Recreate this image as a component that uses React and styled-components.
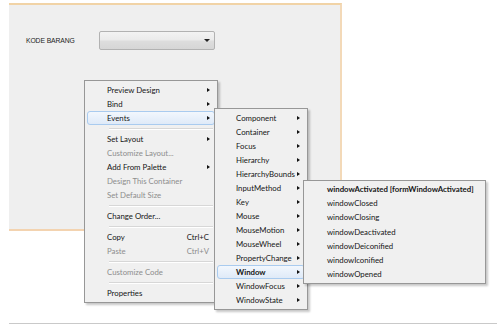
import React from "react";
import styled, { createGlobalStyle } from "styled-components";

const GlobalStyle = createGlobalStyle`
  html, body {
    margin: 0;
    padding: 0;
    background: #ffffff;
  }
  body {
    font-family: Lato, "Noto Sans", sans-serif;
  }
`;

const Page = styled.div`
  position: relative;
  width: 497px;
  height: 327px;
  padding: 3px 0 0 9px;
  box-sizing: border-box;
  overflow: hidden;
`;

const Panel = styled.div`
  width: 333px;
  height: 228px;
  box-sizing: border-box;
  background: #efefef;
  border-top: 2px solid #f1d3a6;
  border-right: 2px solid #f3d9b8;
  border-bottom: 2px solid #f3d3b0;
  padding: 26px 0 0 17px;
`;

const FieldRow = styled.div`
  display: flex;
  align-items: center;
  gap: 24px;
`;

const Label = styled.span`
  font-family: "Liberation Sans", sans-serif;
  font-size: 6.8px;
  color: #222;
  letter-spacing: -0.1px;
`;

const Combo = styled.div`
  width: 116px;
  height: 19px;
  box-sizing: border-box;
  border: 1px solid #b2b2b2;
  border-radius: 2px;
  background: linear-gradient(#f3f3f3 0%, #ebebeb 45%, #dddddd 55%, #d6d6d6 100%);
  display: flex;
  align-items: center;
  justify-content: flex-end;
  padding-right: 4px;
`;

const ComboArrow = styled.span`
  width: 0;
  height: 0;
  border-left: 3px solid transparent;
  border-right: 3px solid transparent;
  border-top: 3px solid #222;
`;

const BottomRule = styled.div`
  margin-top: 92px;
  height: 1px;
  background: #c9c9c9;
`;

const Menu = styled.div`
  position: absolute;
  left: ${p => p.$left}px;
  top: ${p => p.$top}px;
  width: ${p => p.$width}px;
  box-sizing: border-box;
  background: #f0f0f0;
  border: 1px solid #979797;
  padding: ${p => p.$pad}px 2px 2px 2px;
  box-shadow: 2px 2px 2px rgba(0, 0, 0, 0.22);
  display: flex;
  flex-direction: column;
  font-family: Lato, "Noto Sans", sans-serif;
  font-size: 7.8px;
`;

const Item = styled.div`
  height: ${p => p.$h}px;
  box-sizing: border-box;
  display: flex;
  align-items: center;
  padding-left: ${p => p.$indent}px;
  padding-right: 4px;
  color: ${p => (p.$disabled ? "#8d8d8d" : "#161616")};
  font-weight: ${p => (p.$bold ? 700 : 400)};
  border: 1px solid ${p => (p.$active ? "#a9cbef" : "transparent")};
  border-radius: 3px;
  background: ${p =>
    p.$active ? "linear-gradient(#f2f7fd, #dfeaf8)" : "transparent"};
  white-space: nowrap;
`;

const ItemText = styled.span`
  flex: 1;
  margin-right: 2px;
`;

const Shortcut = styled.span`
  color: inherit;
  margin-right: 1px;
`;

const SubArrow = styled.span`
  flex: none;
  width: 0;
  height: 0;
  border-top: 2.5px solid transparent;
  border-bottom: 2.5px solid transparent;
  border-left: 3px solid #111;
`;

const Separator = styled.div`
  height: 1px;
  margin: 3px 2px 2px 22px;
  background: #d7d7d7;
  border-bottom: 1px solid #ffffff;
`;

const mainItems = [
  { label: "Preview Design", arrow: true },
  { label: "Bind", arrow: true },
  { label: "Events", arrow: true, active: true },
  { sep: true },
  { label: "Set Layout", arrow: true },
  { label: "Customize Layout...", disabled: true },
  { label: "Add From Palette", arrow: true },
  { label: "Design This Container", disabled: true },
  { label: "Set Default Size", disabled: true },
  { sep: true },
  { label: "Change Order..." },
  { sep: true },
  { label: "Copy", shortcut: "Ctrl+C" },
  { label: "Paste", shortcut: "Ctrl+V", disabled: true },
  { sep: true },
  { label: "Customize Code", disabled: true },
  { sep: true },
  { label: "Properties" },
];

const eventItems = [
  "Component",
  "Container",
  "Focus",
  "Hierarchy",
  "HierarchyBounds",
  "InputMethod",
  "Key",
  "Mouse",
  "MouseMotion",
  "MouseWheel",
  "PropertyChange",
  "Window",
  "WindowFocus",
  "WindowState",
].map(label => ({ label, arrow: true, active: label === "Window", bold: label === "Window" }));

const windowItems = [
  { label: "windowActivated [formWindowActivated]", bold: true },
  { label: "windowClosed" },
  { label: "windowClosing" },
  { label: "windowDeactivated" },
  { label: "windowDeiconified" },
  { label: "windowIconified" },
  { label: "windowOpened" },
];

const PopupMenu = ({ items, left, top, width, pad = 2, indent = 19, rowHeight = 14 }) => (
  <Menu $left={left} $top={top} $width={width} $pad={pad}>
    {items.map((it, i) =>
      it.sep ? (
        <Separator key={i} />
      ) : (
        <Item
          key={i}
          $h={rowHeight}
          $indent={indent}
          $disabled={it.disabled}
          $bold={it.bold}
          $active={it.active}
        >
          <ItemText>{it.label}</ItemText>
          {it.shortcut && <Shortcut>{it.shortcut}</Shortcut>}
          {it.arrow && <SubArrow />}
        </Item>
      )
    )}
  </Menu>
);

export default function App() {
  return (
    <>
      <GlobalStyle />
      <Page>
        <Panel>
          <FieldRow>
            <Label>KODE BARANG</Label>
            <Combo>
              <ComboArrow />
            </Combo>
          </FieldRow>
        </Panel>
        <BottomRule />
        <PopupMenu items={mainItems} left={84} top={80} width={134} pad={2} />
        <PopupMenu items={eventItems} left={214} top={108} width={94} pad={2} indent={18} />
        <PopupMenu items={windowItems} left={303} top={180} width={183} pad={1} indent={20} rowHeight={14.2} />
      </Page>
    </>
  );
}
